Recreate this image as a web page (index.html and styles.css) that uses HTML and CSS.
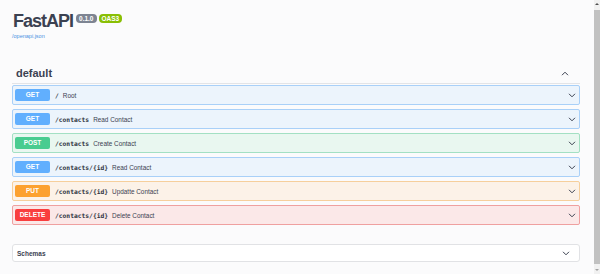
FILE: index.html
```html
<!DOCTYPE html>
<html lang="en">
<head>
  <meta charset="UTF-8">
  <title>FastAPI - Swagger UI</title>
  <link rel="stylesheet" href="styles.css">
</head>
<body>
<div class="page">
  <div class="main">
    <div class="info">
      <h1 class="title"><span class="title-text">FastAPI</span><span class="badge version">0.1.0</span><span class="badge oas">OAS3</span></h1>
      <a class="spec-link" href="#">/openapi.json</a>
    </div>

    <div class="tag-section">
      <div class="tag-header">
        <span class="tag-name">default</span>
        <svg class="chevron up" viewBox="0 0 8 5" width="8" height="5"><path d="M1 4.2 L4 1.2 L7 4.2" fill="none" stroke="#3b4151" stroke-width="1"/></svg>
      </div>

      <div class="op get">
        <span class="method">GET</span>
        <span class="path">/</span>
        <span class="summary">Root</span>
        <svg class="chevron" viewBox="0 0 8 5" width="8" height="5"><path d="M1 0.8 L4 3.8 L7 0.8" fill="none" stroke="#3b4151" stroke-width="1"/></svg>
      </div>
      <div class="op get">
        <span class="method">GET</span>
        <span class="path">/contacts</span>
        <span class="summary">Read Contact</span>
        <svg class="chevron" viewBox="0 0 8 5" width="8" height="5"><path d="M1 0.8 L4 3.8 L7 0.8" fill="none" stroke="#3b4151" stroke-width="1"/></svg>
      </div>
      <div class="op post">
        <span class="method">POST</span>
        <span class="path">/contacts</span>
        <span class="summary">Create Contact</span>
        <svg class="chevron" viewBox="0 0 8 5" width="8" height="5"><path d="M1 0.8 L4 3.8 L7 0.8" fill="none" stroke="#3b4151" stroke-width="1"/></svg>
      </div>
      <div class="op get">
        <span class="method">GET</span>
        <span class="path">/contacts/{id}</span>
        <span class="summary">Read Contact</span>
        <svg class="chevron" viewBox="0 0 8 5" width="8" height="5"><path d="M1 0.8 L4 3.8 L7 0.8" fill="none" stroke="#3b4151" stroke-width="1"/></svg>
      </div>
      <div class="op put">
        <span class="method">PUT</span>
        <span class="path">/contacts/{id}</span>
        <span class="summary">Updatte Contact</span>
        <svg class="chevron" viewBox="0 0 8 5" width="8" height="5"><path d="M1 0.8 L4 3.8 L7 0.8" fill="none" stroke="#3b4151" stroke-width="1"/></svg>
      </div>
      <div class="op delete">
        <span class="method">DELETE</span>
        <span class="path">/contacts/{id}</span>
        <span class="summary">Delete Contact</span>
        <svg class="chevron" viewBox="0 0 8 5" width="8" height="5"><path d="M1 0.8 L4 3.8 L7 0.8" fill="none" stroke="#3b4151" stroke-width="1"/></svg>
      </div>
    </div>

    <div class="schemas">
      <span class="schemas-title">Schemas</span>
      <svg class="chevron" viewBox="0 0 8 5" width="8" height="5"><path d="M1 0.8 L4 3.8 L7 0.8" fill="none" stroke="#3b4151" stroke-width="1"/></svg>
    </div>
  </div>

  <!-- fake window scrollbar -->
  <div class="scrollbar">
    <div class="arrow top"></div>
    <div class="thumb"></div>
    <div class="arrow bottom"></div>
  </div>
</div>
</body>
</html>
```

FILE: styles.css
```css
html, body {
  margin: 0;
  height: 100%;
}
body {
  background: #fbfbfc;
  font-family: "Liberation Sans", Arial, sans-serif;
  color: #3b4151;
}
.page {
  display: flex;
  width: 600px;
  height: 274px;
  overflow: hidden;
}
.main {
  flex: 1;
  min-width: 0;
  padding: 0 14px 0 12px;
}

/* info block */
.info {
  padding-top: 10px;
}
.title {
  margin: 0;
  font-size: 18px;
  line-height: 22px;
  font-weight: bold;
  display: flex;
  align-items: flex-start;
}
.title-text {
  letter-spacing: -1px;
  margin-left: 1px;
}
.badge {
  display: inline-block;
  font-size: 6.5px;
  line-height: 9px;
  height: 9px;
  padding: 0 3px;
  margin-top: 4px;
  border-radius: 4px;
  color: #fff;
  font-weight: bold;
}
.version {
  background: #7d8492;
  margin-left: 3px;
}
.oas {
  background: #89bf04;
  margin-left: 2px;
}
.spec-link {
  display: block;
  margin-top: 1px;
  font-size: 5.5px;
  color: #4990e2;
  text-decoration: none;
}

/* tag section */
.tag-section {
  margin-top: 24px;
}
.tag-header {
  display: flex;
  align-items: center;
  justify-content: space-between;
  height: 20px;
  padding: 0 11px 0 4px;
  border-bottom: 1px solid #e3e4e7;
  margin-bottom: 1px;
}
.tag-name {
  font-size: 11px;
  font-weight: bold;
}

.op {
  display: flex;
  align-items: center;
  height: 18px;
  margin-bottom: 4px;
  padding: 0 2px;
  border: 1px solid;
  border-radius: 2px;
}
.method {
  width: 35px;
  height: 12px;
  line-height: 12px;
  border-radius: 2px;
  color: #fff;
  font-size: 6.5px;
  font-weight: bold;
  text-align: center;
}
.path {
  margin-left: 5px;
  font-family: "DejaVu Sans Mono", monospace;
  font-size: 6.3px;
  font-weight: bold;
  color: #2f3441;
}
.summary {
  margin-left: 4px;
  font-size: 6.4px;
  color: #3b4151;
}
.op .chevron {
  margin-left: auto;
  margin-right: 1px;
}

.get { background: #ecf4fc; border-color: #a9d0f8; }
.get .method { background: #61affe; }
.post { background: #e9f7f0; border-color: #a3e0c3; }
.post .method { background: #49cc90; }
.put { background: #fcf2e8; border-color: #f6cf9c; }
.put .method { background: #fca130; }
.delete { background: #fbe8e8; border-color: #efa0a0; }
.delete .method { background: #f93e3e; }

/* schemas box */
.schemas {
  display: flex;
  align-items: center;
  justify-content: space-between;
  margin-top: 19px;
  height: 16px;
  padding: 0 9px 0 4px;
  background: #fff;
  border: 1px solid #e1e2e5;
  border-radius: 3px;
}
.schemas-title {
  font-size: 6.5px;
  font-weight: bold;
}

/* scrollbar */
.scrollbar {
  flex: 0 0 6px;
  display: flex;
  flex-direction: column;
  background: #f1f1f1;
}
.thumb {
  flex: 1;
  background: #c1c1c1;
}
.arrow {
  height: 10px;
  position: relative;
}
.arrow::after {
  content: "";
  position: absolute;
  left: 1px;
  border-left: 2px solid transparent;
  border-right: 2px solid transparent;
}
.arrow.top::after {
  top: 3px;
  border-bottom: 2px solid #505050;
}
.arrow.bottom::after {
  bottom: 3px;
  border-top: 2px solid #a3a3a3;
}
```
